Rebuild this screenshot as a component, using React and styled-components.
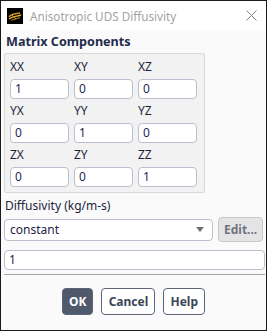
import React from "react";
import styled, { createGlobalStyle } from "styled-components";

const Global = createGlobalStyle`
  html, body { margin: 0; padding: 0; background: #ffffff; }
  * { box-sizing: border-box; }
`;

const Window = styled.div`
  width: 267px;
  height: 331px;
  border: 1px solid #1a1a1a;
  background: #fafafa;
  font-family: "Noto Sans", "Open Sans", sans-serif;
  font-size: 12px;
  color: #1c1f3a;
  display: flex;
  flex-direction: column;
`;

const TitleBar = styled.div`
  height: 29px;
  background: #ffffff;
  display: flex;
  align-items: center;
  padding: 0 9px 0 6px;
  gap: 7px;
`;

const Title = styled.div`
  flex: 1;
  color: #a3a3a3;
  font-size: 11.7px;
`;

const Body = styled.div`
  padding: 0 3px 0 2px;
  display: flex;
  flex-direction: column;
`;

const Heading = styled.div`
  margin: 3px 0 0 3px;
  font-weight: bold;
  font-size: 12.6px;
  line-height: 17px;
  color: #1f2b4a;
`;

const Group = styled.div`
  margin: 3px 0 0 1px;
  width: 201px;
  border: 1px solid #d8d8d8;
  border-radius: 2px;
  background: #f2f2f2;
  padding: 5px 5px 5px 5px;
  display: grid;
  grid-template-columns: repeat(3, 59px);
  column-gap: 5px;
  row-gap: 4px;
`;

const Cell = styled.div`
  display: flex;
  flex-direction: column;
  gap: 4px;
`;

const Label = styled.div`
  line-height: 16px;
  height: 16px;
  color: #1c1f3a;
`;

const Field = styled.div`
  height: 20px;
  border: 1px solid #b9c1ce;
  border-radius: 4px;
  background: #ffffff;
  display: flex;
  align-items: center;
  padding-left: 4px;
  color: #2a1f55;
  line-height: 16px;
`;

const DiffLabel = styled(Label)`
  margin: 5px 0 0 2px;
`;

const Row = styled.div`
  margin-top: 3px;
  display: flex;
  align-items: center;
  gap: 5px;
  padding-left: 1px;
`;

const Select = styled.div`
  width: 210px;
  height: 22px;
  border: 1px solid #b9c1ce;
  border-radius: 4px;
  background: #ffffff;
  display: flex;
  align-items: center;
  justify-content: space-between;
  padding: 0 8px 0 5px;
  color: #1f2547;
`;

const Arrow = styled.div`
  width: 0;
  height: 0;
  border-left: 4px solid transparent;
  border-right: 4px solid transparent;
  border-top: 5px solid #6b6f78;
`;

const EditButton = styled.div`
  width: 45px;
  height: 25px;
  border: 1px solid #c4c7cc;
  border-radius: 4px;
  background: #e4e4e4;
  color: #6f7381;
  font-weight: bold;
  display: flex;
  align-items: center;
  justify-content: center;
`;

const WideField = styled(Field)`
  margin: 8px 0 0 1px;
  width: 261px;
`;

const Separator = styled.div`
  margin: 4px 0 0 1px;
  width: 261px;
  height: 1px;
  background: #a3a3a3;
`;

const Buttons = styled.div`
  margin-top: 13px;
  display: flex;
  justify-content: center;
  gap: 8px;
  padding-left: 1px;
`;

const Button = styled.div`
  height: 27px;
  padding: 0 6px;
  border: 1px solid #5b6577;
  border-radius: 4px;
  background: ${(p) => (p.$primary ? "#4e5a6c" : "#ffffff")};
  color: ${(p) => (p.$primary ? "#ffffff" : "#3b4658")};
  font-weight: bold;
  font-size: 12px;
  display: flex;
  align-items: center;
  justify-content: center;
  min-width: ${(p) => p.$w}px;
`;

const Logo = () => (
  <svg width="16" height="16" viewBox="0 0 16 16">
    <rect width="16" height="16" fill="#000" />
    <path d="M2 9 C5 5 9 6 13 5" stroke="#c8961e" strokeWidth="1.4" fill="none" />
    <path d="M2 11 C6 8 9 9 14 7" stroke="#e0b030" strokeWidth="1.4" fill="none" />
    <path d="M4 12.5 C7 11 10 11 13 9.5" stroke="#a87818" strokeWidth="1.2" fill="none" />
    <path d="M5 7 L9 11" stroke="#d4a02a" strokeWidth="1" fill="none" />
  </svg>
);

const Close = () => (
  <svg width="11" height="11" viewBox="0 0 11 11">
    <path d="M0.5 0.5 L10.5 10.5 M10.5 0.5 L0.5 10.5" stroke="#7d7d7d" strokeWidth="1" />
  </svg>
);

const matrix = [
  ["XX", "1"], ["XY", "0"], ["XZ", "0"],
  ["YX", "0"], ["YY", "1"], ["YZ", "0"],
  ["ZX", "0"], ["ZY", "0"], ["ZZ", "1"],
];

export default function App() {
  return (
    <>
      <Global />
      <Window>
        <TitleBar>
          <Logo />
          <Title>Anisotropic UDS Diffusivity</Title>
          <Close />
        </TitleBar>
        <Body>
          <Heading>Matrix Components</Heading>
          <Group>
            {matrix.map(([l, v]) => (
              <Cell key={l}>
                <Label>{l}</Label>
                <Field>{v}</Field>
              </Cell>
            ))}
          </Group>
          <DiffLabel>Diffusivity (kg/m-s)</DiffLabel>
          <Row>
            <Select>
              <span>constant</span>
              <Arrow />
            </Select>
            <EditButton>Edit...</EditButton>
          </Row>
          <WideField>1</WideField>
          <Separator />
          <Buttons>
            <Button $primary $w={29}>OK</Button>
            <Button $w={54}>Cancel</Button>
            <Button $w={40}>Help</Button>
          </Buttons>
        </Body>
      </Window>
    </>
  );
}
